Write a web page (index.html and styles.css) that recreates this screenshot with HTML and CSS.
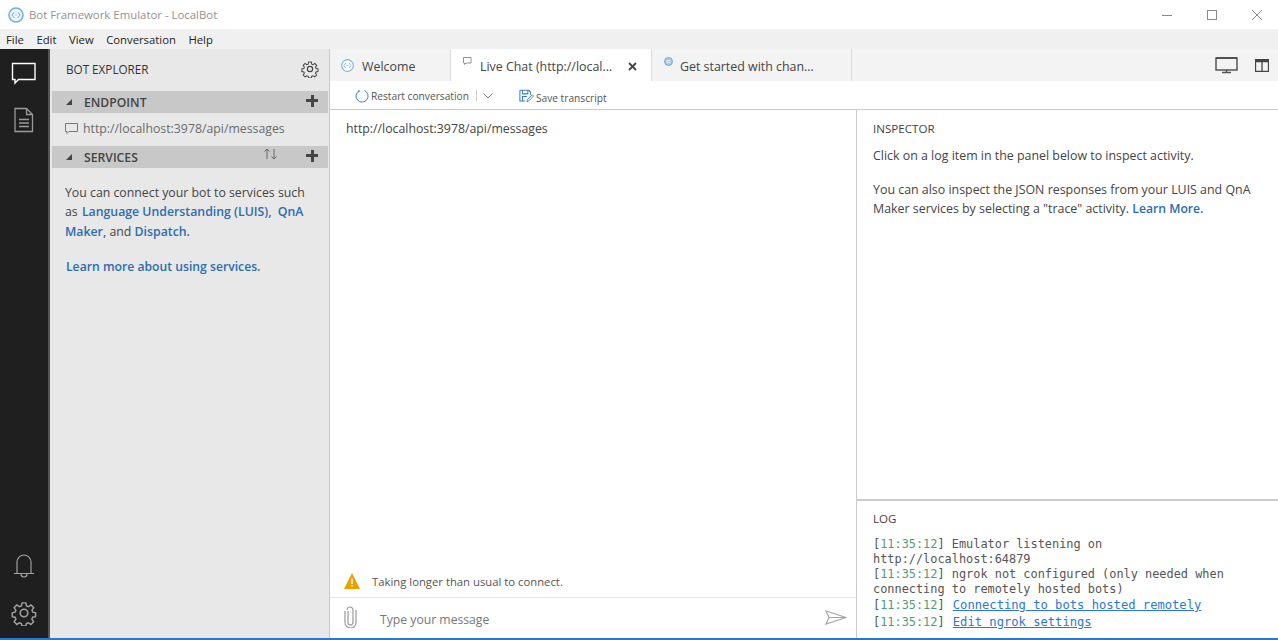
FILE: index.html
```html
<!DOCTYPE html>
<html lang="en">
<head>
<meta charset="utf-8">
<title>Bot Framework Emulator - LocalBot</title>
<link rel="stylesheet" href="styles.css">
</head>
<body>
<div class="app">
  <header class="titlebar">
    <svg class="app-logo" width="16" height="16" viewBox="0 0 16 16"><circle cx="8" cy="8" r="7" fill="#eef6fc" stroke="#6fb0e4" stroke-width="1.600"/><path d="M6.500 5 3.800 8l2.700 3M9.500 5l2.700 3-2.700 3" fill="none" stroke="#6fb0e4" stroke-width="1"/><path d="M6.800 8h2.400" stroke="#a9cfee" stroke-width="1"/></svg>
    <span class="title-text">Bot Framework Emulator - LocalBot</span>
    <div class="win-controls">
      <svg width="12" height="12" viewBox="0 0 12 12"><path d="M1 6.500h10" stroke="#8a8a8a" stroke-width="1"/></svg>
      <svg width="12" height="12" viewBox="0 0 12 12"><rect x="1.500" y="1.500" width="9" height="9" fill="none" stroke="#8a8a8a"/></svg>
      <svg width="12" height="12" viewBox="0 0 12 12"><path d="M1 1l10 10M11 1 1 11" stroke="#8a8a8a" stroke-width="1"/></svg>
    </div>
  </header>
  <nav class="menubar"><span>File</span><span>Edit</span><span>View</span><span>Conversation</span><span>Help</span></nav>
  <div class="main">
    <aside class="nav">
      <div class="nav-top">
        <svg width="26" height="24" viewBox="0 0 26 24"><path d="M1.500 2.500h22.500v16H7.500l-3.500 3.500v-3.500H1.500z" fill="none" stroke="#fff" stroke-width="1.400"/></svg>
        <svg width="22" height="26" viewBox="0 0 22 26"><path d="M2 1.500h11.500l6 6v17H2zM13.500 1.500v6h6M6 12.500h10M6 16h10M6 19.500h10" fill="none" stroke="#9a9a9a" stroke-width="1.300"/></svg>
      </div>
      <div class="nav-bottom">
        <svg width="24" height="26" viewBox="0 0 24 26"><path d="M5 20V9a7 7 0 0 1 14 0v11M2 20.500h20M9 21a3 3 0 0 0 6 0" fill="none" stroke="#a0a0a0" stroke-width="1.200"/></svg>
        <svg width="26" height="26" viewBox="0 0 24 24"><use href="#gear" stroke="#a0a0a0"/></svg>
      </div>
    </aside>
    <section class="explorer">
      <div class="explorer-head">
        <span>BOT EXPLORER</span>
        <svg width="18" height="18" viewBox="0 0 24 24"><defs><g id="gear" fill="none" stroke-width="1.500"><circle cx="12" cy="12" r="3.500"/><path d="M10 1.500h4l.6 3.200 2 .8 2.700-1.800 2.800 2.800-1.800 2.700.8 2 3 .6-.1 4-3 .6-.8 2 1.800 2.700-2.800 2.800-2.700-1.800-2 .8-.6 2.700h-4l-.6-2.700-2-.8-2.700 1.800-2.800-2.800 1.800-2.700-.8-2-3-.6v-4l3-.6.8-2-1.800-2.700 2.800-2.800 2.700 1.800 2-.8z" transform="translate(1.300 1.300) scale(.89)"/></g></defs><use href="#gear" stroke="#444"/></svg>
      </div>
      <div class="section-bar">
        <span class="caret"></span><span class="section-name">ENDPOINT</span>
        <span class="plus"></span>
      </div>
      <div class="endpoint-row">
        <svg width="13" height="13" viewBox="0 0 13 13"><path d="M.5 1.500h12v8H4l-2 2v-2H.5z" fill="none" stroke="#777"/></svg>
        <span>http://localhost:3978/api/messages</span>
      </div>
      <div class="section-bar services">
        <span class="caret"></span><span class="section-name">SERVICES</span>
        <svg class="sort" width="15" height="12" viewBox="0 0 15 12"><path d="M4 11V1M1.500 3.500 4 1l2.500 2.500M11 1v10M8.500 8.500 11 11l2.500-2.500" fill="none" stroke="#666"/></svg>
        <span class="plus"></span>
      </div>
      <div class="services-copy">
        <div>You can connect your bot to services such</div>
        <div>as <a class="lang">Language Understanding (LUIS),</a> <a class="qna">QnA</a></div>
        <div class="third"><a>Maker,</a> and <a>Dispatch.</a></div>
        <div class="learn"><a>Learn more about using services.</a></div>
      </div>
    </section>
    <section class="workspace">
      <div class="tabs">
        <div class="tab tab-welcome">
          <svg class="tab-icon" width="13" height="13" viewBox="0 0 13 13"><circle cx="6.500" cy="6.500" r="5.800" fill="#fff" stroke="#7db7e6" stroke-width="1.200"/><path d="M5 4 2.900 6.500 5 9M8 4l2.100 2.500L8 9" fill="none" stroke="#7db7e6" stroke-width=".9"/><path d="M5.300 6.500h2.400" stroke="#a9cfee"/></svg>
          <span>Welcome</span>
        </div>
        <div class="tab tab-live">
          <svg class="tab-icon small" width="9" height="9" viewBox="0 0 9 9"><path d="M.5.500h7.500v5.500H3l-1.500 1.500V6H.5z" fill="none" stroke="#888" stroke-width=".9"/></svg>
          <span>Live Chat (http://local...</span>
          <svg class="tab-close" width="9" height="9" viewBox="0 0 9 9"><path d="M1 1l7 7M8 1 1 8" stroke="#444" stroke-width="1.800"/></svg>
        </div>
        <div class="tab tab-started">
          <svg class="tab-icon small" width="9" height="9" viewBox="0 0 9 9"><circle cx="4.500" cy="4.500" r="4" fill="#a9cbea" stroke="#5a9fd8" stroke-width=".8"/><path d="M2.500 3.500h4M2.500 5.500h4" stroke="#fff" stroke-width=".7"/></svg>
          <span>Get started with chan...</span>
        </div>
        <div class="tab-tools">
          <svg width="23" height="17" viewBox="0 0 23 17"><path d="M1 1h21v12H1z" fill="none" stroke="#555" stroke-width="1.500"/><path d="M1 1h21" stroke="#444" stroke-width="1.500"/><path d="M11.500 13v3M7 15.500h9" stroke="#555" stroke-width="1.500"/></svg>
          <svg width="14" height="13" viewBox="0 0 14 13"><path d="M.5 2.500h13v10H.5zM7 2.500v10" fill="none" stroke="#444" stroke-width="1.300"/><path d="M0 1.500h14" stroke="#444" stroke-width="3"/></svg>
        </div>
      </div>
      <div class="toolbar">
        <button class="tool restart">
          <svg width="14" height="14" viewBox="0 0 14 14"><path d="M4.200 1.800a6 6 0 1 0 5.300-.2" fill="none" stroke="#3f7fc4" stroke-width="1"/><path d="M3 .9 4.600 2 3.500 3.500" fill="none" stroke="#3f7fc4" stroke-width=".8"/></svg>
          <span>Restart conversation</span>
        </button>
        <span class="tool-sep"></span>
        <svg class="chev" width="10" height="6" viewBox="0 0 10 6"><path d="M.5.500 5 5 9.500.5" fill="none" stroke="#888"/></svg>
        <button class="tool save">
          <svg class="save-icon" width="15" height="15" viewBox="0 0 17 16"><path d="M1 1h10l2 2v3M1 1v12h6M4 1v4h6V1M4 13V8h5" fill="none" stroke="#3f7fc4" stroke-width="1.200"/><path d="M9 14l.7-2.500L15 6l1.500 1.500-5.300 5.500z" fill="none" stroke="#3f7fc4"/></svg>
          <span>Save transcript</span>
        </button>
      </div>
      <div class="panes">
        <div class="chat">
          <div class="chat-url">http://localhost:3978/api/messages</div>
          <div class="connect-status">
            <svg width="16" height="16" viewBox="0 0 16 16"><path d="M8 0 16 16H0z" fill="#e8a200"/><path d="M8 5.500v5.500M8 12v1.500" stroke="#fff" stroke-width="1.400"/></svg>
            <span>Taking longer than usual to connect.</span>
          </div>
          <div class="composer">
            <svg class="clip" width="13" height="22" viewBox="0 0 13 22"><path d="M4 5v11.500a2.500 2.500 0 0 0 5 0V4a3 3 0 0 0-6 0v0M1 5v11.500a5.500 5.500 0 0 0 11 0V4" fill="none" stroke="#999" stroke-width="1.200"/></svg>
            <span class="placeholder">Type your message</span>
            <svg class="send" width="22" height="15" viewBox="0 0 22 15"><path d="M1 1 21 7.500 1 14l3-6.500zM4 7.500h17" fill="none" stroke="#a6a6a6" stroke-width="1.200"/></svg>
          </div>
        </div>
        <div class="side">
          <div class="inspector">
            <h2>INSPECTOR</h2>
            <p>Click on a log item in the panel below to inspect activity.</p>
            <div>You can also inspect the JSON responses from your LUIS and QnA</div>
            <div>Maker services by selecting a "trace" activity. <a>Learn More.</a></div>
          </div>
          <div class="log">
            <h2>LOG</h2>
            <div class="log-line">[<span class="ts">11:35:12</span>] Emulator listening on</div>
            <div class="log-line">http://localhost:64879</div>
            <div class="log-line">[<span class="ts">11:35:12</span>] ngrok not configured (only needed when</div>
            <div class="log-line">connecting to remotely hosted bots)</div>
            <div class="log-line link-line">[<span class="ts">11:35:12</span>] <a>Connecting to bots hosted remotely</a></div>
            <div class="log-line link-line last">[<span class="ts">11:35:12</span>] <a>Edit ngrok settings</a></div>
          </div>
        </div>
      </div>
    </section>
  </div>
  <div class="statusbar"></div>
</div>
</body>
</html>
```
FILE: styles.css
```css
* { box-sizing: border-box; }
html, body { margin: 0; height: 100%; overflow: hidden; }
body { font-family: "Open Sans", "Noto Sans", sans-serif; font-size: 12px; color: #333; background: #fff; }
.app { display: flex; flex-direction: column; height: 640px; width: 1278px; }

.titlebar { height: 29px; display: flex; align-items: center; padding-left: 8px; background: #fff; }
.title-text { margin-left: 5px; color: #9a8f8f; font-size: 11.4px; }
.win-controls { margin-left: auto; display: flex; gap: 33px; padding-right: 15px; }

.menubar { height: 20px; background: #f0f0f0; display: flex; align-items: center; padding-left: 6px; gap: 12.500px; color: #222; font-size: 11.3px; }

.main { flex: 1; display: flex; min-height: 0; }

.nav { width: 50px; background: #1f1f1f; border-right: 2px solid #555; display: flex; flex-direction: column; justify-content: space-between; align-items: center; padding: 12px 0 12px; }
.nav-top, .nav-bottom { display: flex; flex-direction: column; align-items: center; }
.nav-top { gap: 22px; }
.nav-bottom { gap: 21px; }

.explorer { width: 280px; background: #e8e8e8; border-right: 1px solid #c8c8c8; color: #444; }
.explorer-head { height: 42px; display: flex; align-items: center; justify-content: space-between; padding: 0 10px 2px 16px; font-size: 11.7px; color: #333; }
.section-bar { height: 22px; margin: 0 1px 0 2px; background: #c8c8c8; display: flex; align-items: center; padding: 0 10px 0 14px; color: #444; font-size: 12.2px; font-weight: 600; }
.caret { width: 0; height: 0; border-left: 6px solid transparent; border-bottom: 6px solid #444; }
.section-name { margin-left: 12px; flex: 1; }
.plus { width: 12px; height: 12px; margin-top: -3px; background: linear-gradient(#444, #444) center / 100% 3px no-repeat, linear-gradient(#444, #444) center / 3px 100% no-repeat; }
.sort { margin-right: 28px; margin-top: -6px; }
.endpoint-row { height: 33px; display: flex; align-items: center; padding: 0 0 3px 15px; gap: 5px; color: #6b6b6b; font-size: 12.3px; }
.services-copy { padding: 15px 16px 0 15px; line-height: 19px; color: #444; font-size: 12.3px; }
.services-copy a { color: #2c6cb0; font-weight: 600; }
.services-copy .lang { margin-left: 1px; }
.services-copy .qna { margin-left: 3px; }
.services-copy .third { margin-top: 1px; }
.services-copy .learn { margin: 16px 0 0 1px; font-size: 12.2px; }

.workspace { flex: 1; min-width: 0; display: flex; flex-direction: column; }
.tabs { height: 32px; background: #f3f3f3; display: flex; }
.tab { display: flex; align-items: center; padding-top: 2px; border-right: 1px solid #dcdcdc; color: #444; font-size: 12.4px; }
.tab-welcome { width: 121px; padding-left: 11px; gap: 8px; }
.tab-welcome .tab-icon { margin-top: -2px; }
.tab-live { width: 201px; background: #fff; padding-left: 12px; gap: 8px; }
.tab-started { width: 200px; padding-left: 12px; gap: 7px; }
.tab-icon.small { margin-top: -9px; }
.tab-close { margin-left: auto; margin-right: 14px; }
.tab-tools { margin-left: auto; display: flex; align-items: center; gap: 17px; padding: 1px 9px 0 0; }

.toolbar { height: 29px; border-bottom: 1px solid #ccc; display: flex; align-items: center; padding-left: 25px; }
.tool { border: 0; background: none; padding: 0; display: inline-flex; align-items: center; font: inherit; color: #555; font-size: 10.2px; }
.restart { gap: 2px; margin-top: 1px; }
.tool-sep { width: 1px; height: 11px; background: #ccc; margin: 1px 0 0 7px; }
.chev { margin: 1px 0 0 6px; }
.save { margin-left: 26px; margin-top: 5px; gap: 2px; }
.save-icon { margin-top: -2px; }

.panes { flex: 1; display: flex; min-height: 0; }
.chat { width: 527px; border-right: 1px solid #ccc; display: flex; flex-direction: column; }
.chat-url { flex: 1; padding: 10px 16px; color: #444; font-size: 12.3px; }
.connect-status { height: 37px; padding: 4px 14px 0; display: flex; align-items: center; gap: 12px; font-size: 11.3px; color: #555; border-bottom: 1px solid #e4e4e4; }
.composer { height: 40px; display: flex; align-items: center; padding: 2px 9px 0 14px; color: #777; font-size: 12.2px; }
.clip, .send { margin-top: -4px; }
.placeholder { margin-left: 23px; flex: 1; }

.side { flex: 1; min-width: 0; display: flex; flex-direction: column; }
h2 { margin: 0; font-weight: 400; font-size: 11.6px; color: #444; }
.inspector { height: 391px; border-bottom: 2px solid #ccc; padding: 10px 16px; color: #444; line-height: 19px; font-size: 12.4px; }
.inspector h2 { line-height: 18px; margin-bottom: 8px; }
.inspector p { margin: 0 0 15px; }
.inspector a { color: #2c6cb0; font-weight: 600; font-size: 12.2px; }
.log { flex: 1; padding: 9px 16px 0; }
.log h2 { line-height: 18px; margin-bottom: 9px; }
.log-line { font-family: "DejaVu Sans Mono", "Liberation Mono", monospace; font-size: 11.900px; line-height: 15px; color: #555; }
.link-line { margin-top: 1px; }
.link-line.last { margin-top: 2px; }
.ts { color: #4f9c7c; }
.log a { color: #2b78d4; text-decoration: underline; font-size: 12.150px; margin-left: 1px; }

.statusbar { height: 2px; background: #2b78c8; }
```
